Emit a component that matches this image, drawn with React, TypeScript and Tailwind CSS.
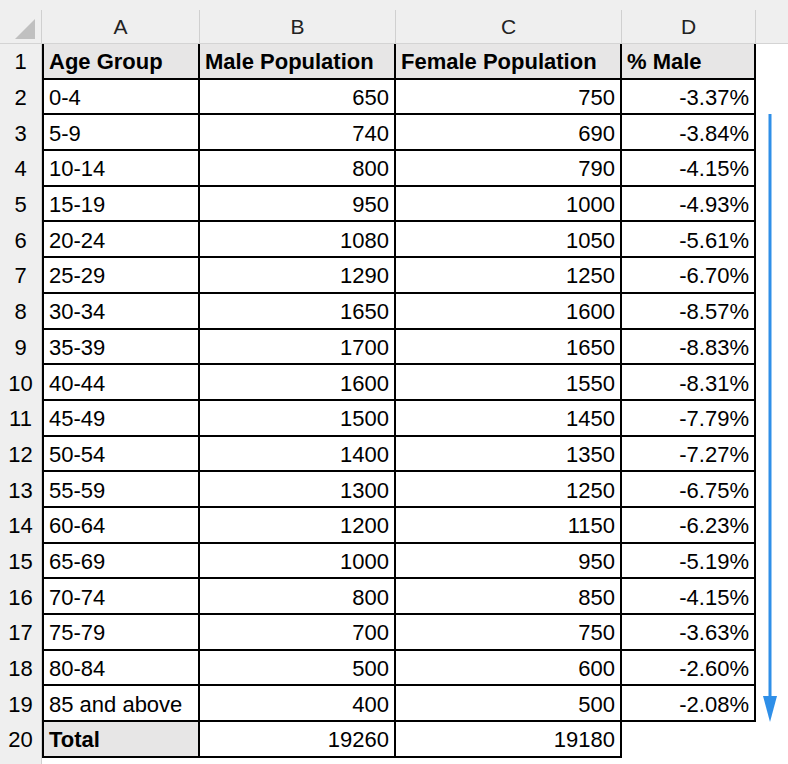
import React from "react";

const rows: [string, string, string, string][] = [
  ["0-4", "650", "750", "-3.37%"],
  ["5-9", "740", "690", "-3.84%"],
  ["10-14", "800", "790", "-4.15%"],
  ["15-19", "950", "1000", "-4.93%"],
  ["20-24", "1080", "1050", "-5.61%"],
  ["25-29", "1290", "1250", "-6.70%"],
  ["30-34", "1650", "1600", "-8.57%"],
  ["35-39", "1700", "1650", "-8.83%"],
  ["40-44", "1600", "1550", "-8.31%"],
  ["45-49", "1500", "1450", "-7.79%"],
  ["50-54", "1400", "1350", "-7.27%"],
  ["55-59", "1300", "1250", "-6.75%"],
  ["60-64", "1200", "1150", "-6.23%"],
  ["65-69", "1000", "950", "-5.19%"],
  ["70-74", "800", "850", "-4.15%"],
  ["75-79", "700", "750", "-3.63%"],
  ["80-84", "500", "600", "-2.60%"],
  ["85 and above", "400", "500", "-2.08%"],
];

const cols = "grid grid-cols-[42px_158px_196px_226px_134px_32px]";
const cell = "h-[35.7px] flex items-center pt-[2px] px-[5px] border-r-2 border-b-2 border-black";

export default function App() {
  return (
    <div className="w-[788px] h-[764px] bg-white relative overflow-hidden text-[22px] text-black" style={{ fontFamily: '"Liberation Sans", Arial, sans-serif' }}>
      <div className={`${cols} h-[44px] bg-[#efefef] border-b border-[#d4d4d4]`}>
        <div className="border-r border-[#d0d0d0] mt-[10px] relative">
          <svg className="absolute right-[6px] bottom-[4px]" width="20" height="20" viewBox="0 0 20 20"><polygon points="20,0 20,20 0,20" fill="#c0c0c0" /></svg>
        </div>
        {["A", "B", "C", "D"].map((c) => (
          <div key={c} className="border-r border-[#d0d0d0] mt-[10px] flex items-center justify-center text-[#222] text-[21px]">{c}</div>
        ))}
        <div className="mt-[10px]" />
      </div>
      <div className={cols}>
        <div className="h-[35.7px] bg-[#efefef] border-r border-[#d0d0d0] flex items-center justify-center">1</div>
        {["Age Group", "Male Population", "Female Population", "% Male"].map((h, i) => (
          <div key={h} className={`${cell} bg-[#e7e6e6] font-bold ${i === 0 ? "border-l-2" : ""} whitespace-nowrap overflow-hidden`}>{h}</div>
        ))}
        <div />
        {rows.map((r, i) => (
          <React.Fragment key={r[0]}>
            <div className="h-[35.7px] bg-[#efefef] border-r border-[#d0d0d0] flex items-center justify-center">{i + 2}</div>
            <div className={`${cell} border-l-2`}>{r[0]}</div>
            <div className={`${cell} justify-end`}>{r[1]}</div>
            <div className={`${cell} justify-end`}>{r[2]}</div>
            <div className={`${cell} justify-end`}>{r[3]}</div>
            <div />
          </React.Fragment>
        ))}
        <div className="h-[35.7px] bg-[#efefef] border-r border-[#d0d0d0] flex items-center justify-center">20</div>
        <div className={`${cell} border-l-2 bg-[#e7e6e6] font-bold`}>Total</div>
        <div className={`${cell} justify-end`}>19260</div>
        <div className={`${cell} justify-end`}>19180</div>
        <div />
        <div />
        <div className="h-[10px] bg-[#efefef] border-r border-[#d0d0d0]" />
      </div>
      <svg className="absolute left-[762px] top-[114px]" width="16" height="610" viewBox="0 0 16 610">
        <line x1="8" y1="0" x2="8" y2="590" stroke="#2f8fe8" strokeWidth="3" />
        <polygon points="1,582 15,582 8,608" fill="#2f8fe8" />
      </svg>
    </div>
  );
}
